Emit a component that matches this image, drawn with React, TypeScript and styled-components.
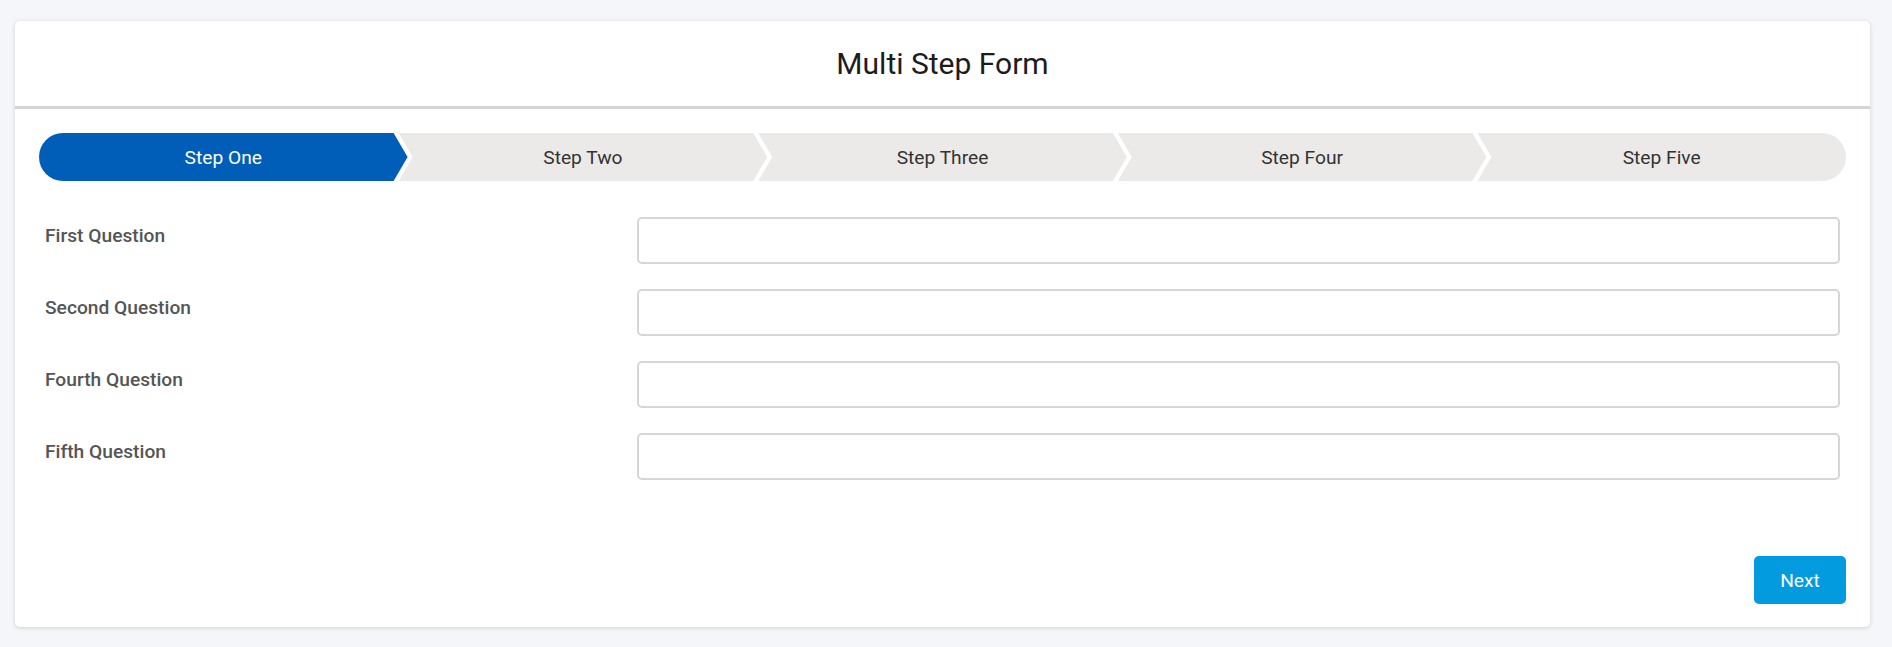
import React from "react";
import styled, { createGlobalStyle } from "styled-components";

const GlobalStyle = createGlobalStyle`
  * { box-sizing: border-box; }
  body {
    margin: 0;
    padding: 21px 22px 20px 15px;
    background: #f5f6fa;
    font-family: Roboto, "Liberation Sans", Arial, sans-serif;
  }
`;

const Card = styled.div`
  background: #fff;
  border-radius: 5px;
  box-shadow: 0 1px 4px rgba(0, 0, 0, 0.16);
`;

const Header = styled.div`
  height: 88px;
  border-bottom: 3px solid #d4d4d4;
  display: flex;
  align-items: center;
  justify-content: center;
`;

const Title = styled.h1`
  margin: 0;
  font-size: 30px;
  font-weight: 400;
  color: #1c1c1c;
`;

const Body = styled.div`
  padding: 24px 24px 23px;
`;

const StepBar = styled.div`
  display: flex;
  height: 48px;
  border-radius: 24px;
  overflow: hidden;
`;

const ARROW = 14;

const Step = styled.div<{ $active?: boolean; $first?: boolean; $last?: boolean }>`
  flex: 1 1 0;
  display: flex;
  align-items: center;
  justify-content: center;
  margin-left: ${(p) => (p.$first ? "0" : "-9px")};
  padding: 0 ${ARROW}px;
  background: ${(p) => (p.$active ? "#005eb8" : "#ebeae8")};
  color: ${(p) => (p.$active ? "#fff" : "#333")};
  font-size: 19.2px;
  clip-path: ${(p) =>
    p.$first
      ? `polygon(0 0, calc(100% - ${ARROW}px) 0, 100% 50%, calc(100% - ${ARROW}px) 100%, 0 100%)`
      : p.$last
      ? `polygon(0 0, 100% 0, 100% 100%, 0 100%, ${ARROW}px 50%)`
      : `polygon(0 0, calc(100% - ${ARROW}px) 0, 100% 50%, calc(100% - ${ARROW}px) 100%, 0 100%, ${ARROW}px 50%)`};
`;

const Fields = styled.div`
  margin-top: 36px;
  display: flex;
  flex-direction: column;
  gap: 25px;
`;

const Row = styled.div`
  display: grid;
  grid-template-columns: 33% 1fr;
  padding: 0 6px;
`;

const Label = styled.label`
  padding-top: 5px;
  font-size: 19.2px;
  line-height: 1.5;
  font-weight: 500;
  color: #555;
`;

const Input = styled.input`
  height: 47px;
  width: 100%;
  border: 2px solid #d6d6d6;
  border-radius: 5px;
  padding: 0 12px;
  font-family: inherit;
  font-size: 19.2px;
  outline: none;
`;

const Footer = styled.div`
  margin-top: 76px;
  display: flex;
  justify-content: flex-end;
`;

const NextButton = styled.button`
  width: 92px;
  height: 48px;
  border: none;
  border-radius: 5px;
  background: #039be0;
  color: #fff;
  font-family: inherit;
  font-size: 19.2px;
  cursor: pointer;
`;

const steps = ["Step One", "Step Two", "Step Three", "Step Four", "Step Five"];
const questions = ["First Question", "Second Question", "Fourth Question", "Fifth Question"];

export default function App() {
  return (
    <>
      <GlobalStyle />
      <Card>
        <Header>
          <Title>Multi Step Form</Title>
        </Header>
        <Body>
          <StepBar>
            {steps.map((s, i) => (
              <Step key={s} $active={i === 0} $first={i === 0} $last={i === steps.length - 1}>
                {s}
              </Step>
            ))}
          </StepBar>
          <Fields>
            {questions.map((q) => (
              <Row key={q}>
                <Label>{q}</Label>
                <Input type="text" />
              </Row>
            ))}
          </Fields>
          <Footer>
            <NextButton>Next</NextButton>
          </Footer>
        </Body>
      </Card>
    </>
  );
}
